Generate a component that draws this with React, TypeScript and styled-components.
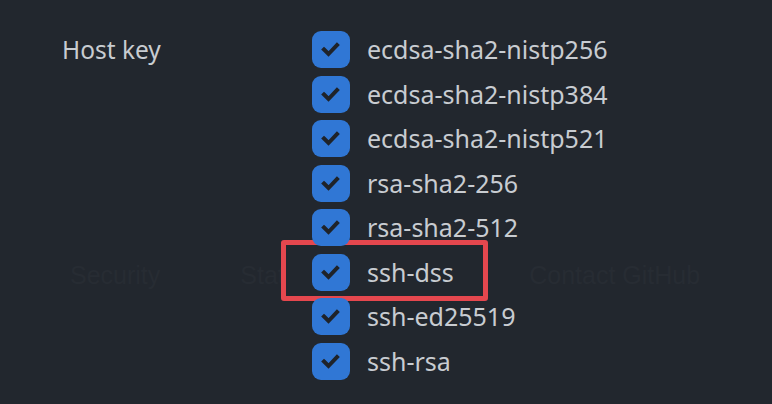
import React from "react";
import styled, { createGlobalStyle } from "styled-components";

const Global = createGlobalStyle`
  html, body { margin: 0; padding: 0; background: #22272e; }
  body { width: 772px; height: 404px; overflow: hidden; font-family: "Noto Sans", "Open Sans", sans-serif; }
`;

const Page = styled.div`
  position: relative;
  width: 772px;
  height: 404px;
  background: #22272e;
  overflow: hidden;
`;

const Footer = styled.nav`
  position: absolute;
  left: 70px;
  top: 261px;
  display: flex;
  gap: 80px;
  z-index: 0;
  font-family: "Liberation Sans", Arial, sans-serif;
  font-size: 25px;
  color: #272c33;
`;

const FooterLink = styled.span<{ $push?: number }>`
  margin-left: ${(p) => p.$push ?? 0}px;
`;

const Main = styled.div`
  position: relative;
  z-index: 1;
  display: flex;
  padding: 31px 0 0 62px;
`;

const Label = styled.div`
  width: 250px;
  height: 37px;
  display: flex;
  align-items: center;
  font-size: 24.5px;
  color: #c8ccd1;
`;

const List = styled.ul`
  list-style: none;
  margin: 0;
  padding: 0;
  display: flex;
  flex-direction: column;
  gap: 7.5px;
`;

const Row = styled.li`
  position: relative;
  display: flex;
  align-items: center;
  gap: 17px;
  height: 37px;
`;

const Highlight = styled.div`
  position: absolute;
  left: -31px;
  top: -14px;
  bottom: -10px;
  width: 207px;
  box-sizing: border-box;
  border: 5px solid #e5474e;
  border-radius: 3px;
  background: #22272e;
  z-index: 0;
`;

const Box = styled.span`
  position: relative;
  z-index: 1;
  width: 38px;
  height: 37px;
  border-radius: 9px;
  background: #3077d5;
  display: flex;
  align-items: center;
  justify-content: center;
  flex-shrink: 0;
`;

const Text = styled.span`
  position: relative;
  z-index: 1;
  font-size: 25px;
  color: #c8ccd1;
  line-height: 1;
`;

const Check = () => (
  <svg width="38" height="37" viewBox="0 0 38 37">
    <polyline
      points="12,18.5 16.5,23 25,14"
      fill="none"
      stroke="#1f2329"
      strokeWidth="4"
      strokeLinecap="square"
      strokeLinejoin="miter"
    />
  </svg>
);

const keys = [
  "ecdsa-sha2-nistp256",
  "ecdsa-sha2-nistp384",
  "ecdsa-sha2-nistp521",
  "rsa-sha2-256",
  "rsa-sha2-512",
  "ssh-dss",
  "ssh-ed25519",
  "ssh-rsa",
];

export default function App() {
  return (
    <Page>
      <Global />
      <Footer>
        <FooterLink>Security</FooterLink>
        <FooterLink>Status</FooterLink>
        <FooterLink $push={138}>Contact GitHub</FooterLink>
      </Footer>
      <Main>
        <Label>Host key</Label>
        <List>
          {keys.map((k) => (
            <Row key={k}>
              {k === "ssh-dss" && <Highlight />}
              <Box>
                <Check />
              </Box>
              <Text>{k}</Text>
            </Row>
          ))}
        </List>
      </Main>
    </Page>
  );
}
